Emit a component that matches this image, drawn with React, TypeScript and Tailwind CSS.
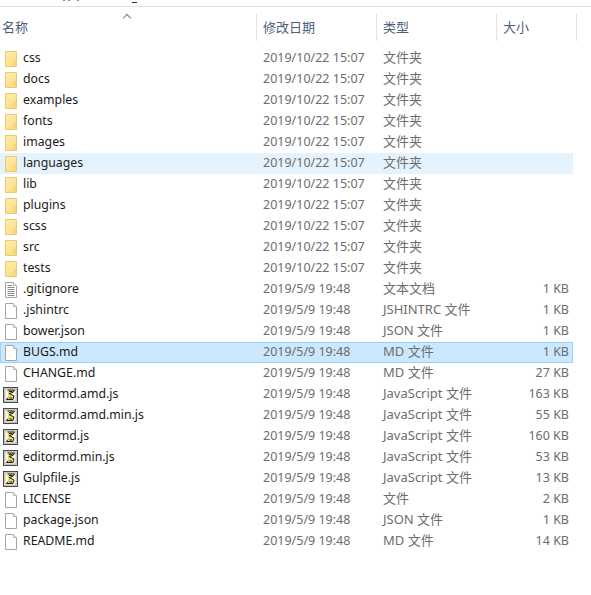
const rows = [
  { name: 'css', date: '2019/10/22 15:07', type: '文件夹', size: '', icon: 'folder' },
  { name: 'docs', date: '2019/10/22 15:07', type: '文件夹', size: '', icon: 'folder' },
  { name: 'examples', date: '2019/10/22 15:07', type: '文件夹', size: '', icon: 'folder' },
  { name: 'fonts', date: '2019/10/22 15:07', type: '文件夹', size: '', icon: 'folder' },
  { name: 'images', date: '2019/10/22 15:07', type: '文件夹', size: '', icon: 'folder' },
  { name: 'languages', date: '2019/10/22 15:07', type: '文件夹', size: '', icon: 'folder', state: 'hover' },
  { name: 'lib', date: '2019/10/22 15:07', type: '文件夹', size: '', icon: 'folder' },
  { name: 'plugins', date: '2019/10/22 15:07', type: '文件夹', size: '', icon: 'folder' },
  { name: 'scss', date: '2019/10/22 15:07', type: '文件夹', size: '', icon: 'folder' },
  { name: 'src', date: '2019/10/22 15:07', type: '文件夹', size: '', icon: 'folder' },
  { name: 'tests', date: '2019/10/22 15:07', type: '文件夹', size: '', icon: 'folder' },
  { name: '.gitignore', date: '2019/5/9 19:48', type: '文本文档', size: '1 KB', icon: 'text' },
  { name: '.jshintrc', date: '2019/5/9 19:48', type: 'JSHINTRC 文件', size: '1 KB', icon: 'file' },
  { name: 'bower.json', date: '2019/5/9 19:48', type: 'JSON 文件', size: '1 KB', icon: 'file' },
  { name: 'BUGS.md', date: '2019/5/9 19:48', type: 'MD 文件', size: '1 KB', icon: 'file', state: 'selected' },
  { name: 'CHANGE.md', date: '2019/5/9 19:48', type: 'MD 文件', size: '27 KB', icon: 'file' },
  { name: 'editormd.amd.js', date: '2019/5/9 19:48', type: 'JavaScript 文件', size: '163 KB', icon: 'script' },
  { name: 'editormd.amd.min.js', date: '2019/5/9 19:48', type: 'JavaScript 文件', size: '55 KB', icon: 'script' },
  { name: 'editormd.js', date: '2019/5/9 19:48', type: 'JavaScript 文件', size: '160 KB', icon: 'script' },
  { name: 'editormd.min.js', date: '2019/5/9 19:48', type: 'JavaScript 文件', size: '53 KB', icon: 'script' },
  { name: 'Gulpfile.js', date: '2019/5/9 19:48', type: 'JavaScript 文件', size: '13 KB', icon: 'script' },
  { name: 'LICENSE', date: '2019/5/9 19:48', type: '文件', size: '2 KB', icon: 'file' },
  { name: 'package.json', date: '2019/5/9 19:48', type: 'JSON 文件', size: '1 KB', icon: 'file' },
  { name: 'README.md', date: '2019/5/9 19:48', type: 'MD 文件', size: '14 KB', icon: 'file' },
]

function FileIcon({ icon }: { icon: string }) {
  if (icon === 'folder') {
    return (
      <svg width="14" height="16" viewBox="0 0 14 16">
        <defs>
          <linearGradient id="fld" x1="0" y1="0" x2="0.6" y2="1">
            <stop offset="0" stopColor="#fdeeb4" />
            <stop offset="1" stopColor="#fcdc82" />
          </linearGradient>
        </defs>
        <path d="M1.5 0.5 H12.5 V15.5 H1.5 Z" fill="url(#fld)" stroke="#eccb6c" />
        <path d="M10.5 15 V9.5 H12.5" fill="none" stroke="#eccb6c" />
      </svg>
    )
  }
  if (icon === 'script') {
    return (
      <svg className="-ml-px" width="15" height="16" viewBox="0 0 15 16">
        <rect x="0.5" y="0.5" width="14" height="15" fill="#d9d9d2" stroke="#4a4a4a" />
        <rect x="2" y="2" width="11" height="12" fill="#fbfbf4" stroke="#8a8a8a" strokeWidth="0.5" />
        <path d="M4.5 3 H11.5 L10 5.5 L6 6.5 L11 9 L10 12.5 H3.5 L5 10.5" fill="#f0dc50" stroke="#1c1c1c" strokeWidth="1" />
        <path d="M6 4.5 H9.5 M6.5 11 H9" stroke="#1c1c1c" strokeWidth="1" />
      </svg>
    )
  }
  return (
    <svg width="14" height="16" viewBox="0 0 14 16">
      <path d="M1.5 0.5 H9.5 L12.5 3.5 V15.5 H1.5 Z" fill="#fff" stroke="#a4a4a4" />
      <path d="M9.5 0.5 V3.5 H12.5" fill="#f4f4f4" stroke="#b4b4b4" />
      {icon === 'text' && (
        <path d="M3.5 3.5 H8 M3.5 5.5 H10.5 M3.5 7.5 H10.5 M3.5 9.5 H10.5 M3.5 11.5 H10.5 M3.5 13.5 H10.5" stroke="#8c8c8c" />
      )}
    </svg>
  )
}

export default function App() {
  return (
    <div className="h-[595px] w-[591px] overflow-hidden bg-white font-['Noto_Sans','Noto_Sans_CJK_SC',sans-serif] text-[12.5px]">
      {/* Title bar remnant: only specks of the cropped title remain */}
      <div className="relative h-[7px] border-b border-[#e0e0e0]">
        <span className="absolute left-[63px] top-0 h-px w-[2px] bg-[#888]" />
        <span className="absolute left-[68px] top-0 h-px w-[2px] bg-[#888]" />
        <span className="absolute left-[77px] top-0 h-px w-[2px] bg-[#888]" />
        <span className="absolute left-[132px] top-[2px] h-px w-[5px] bg-[#333]" />
      </div>

      {/* Column headers */}
      <div className="relative mt-[7px] flex h-[27px] text-[13px] text-[#4c607a]">
        <span className="absolute left-[124px] top-[1px] h-[6px] w-[6px] rotate-45 border-l border-t border-[#7c7c7c]" />
        <div className="flex w-[257px] items-center border-r border-[#e3e3e3] pl-[2px]">名称</div>
        <div className="flex w-[120px] items-center border-r border-[#e3e3e3] pl-[6px]">修改日期</div>
        <div className="flex w-[120px] items-center border-r border-[#e3e3e3] pl-[6px]">类型</div>
        <div className="flex w-[80px] items-center border-r border-[#e3e3e3] pl-[6px]">大小</div>
      </div>

      {/* File rows */}
      <div className="mt-[7px] w-[573px]">
        {rows.map(r => (
          <div
            key={r.name}
            className={`flex h-[21px] items-center border ${
              r.state === 'selected'
                ? 'border-[#99d1ff] bg-[#cce8ff]'
                : r.state === 'hover'
                  ? 'border-[#e5f3ff] bg-[#e5f3ff]'
                  : 'border-transparent'
            }`}
          >
            <div className="flex w-[256px] items-center gap-[3px] pl-[3px] text-[12.3px] text-[#1a1a1a]">
              <span className="flex w-[16px] shrink-0"><FileIcon icon={r.icon} /></span>
              <span>{r.name}</span>
            </div>
            <div className="w-[120px] pl-[6px] text-[#6d6d6d]">{r.date}</div>
            <div className="w-[120px] pb-[2px] pl-[6px] text-[13px] text-[#6d6d6d]">{r.type}</div>
            <div className="w-[72px] text-right text-[#6d6d6d]">{r.size}</div>
          </div>
        ))}
      </div>
    </div>
  )
}
